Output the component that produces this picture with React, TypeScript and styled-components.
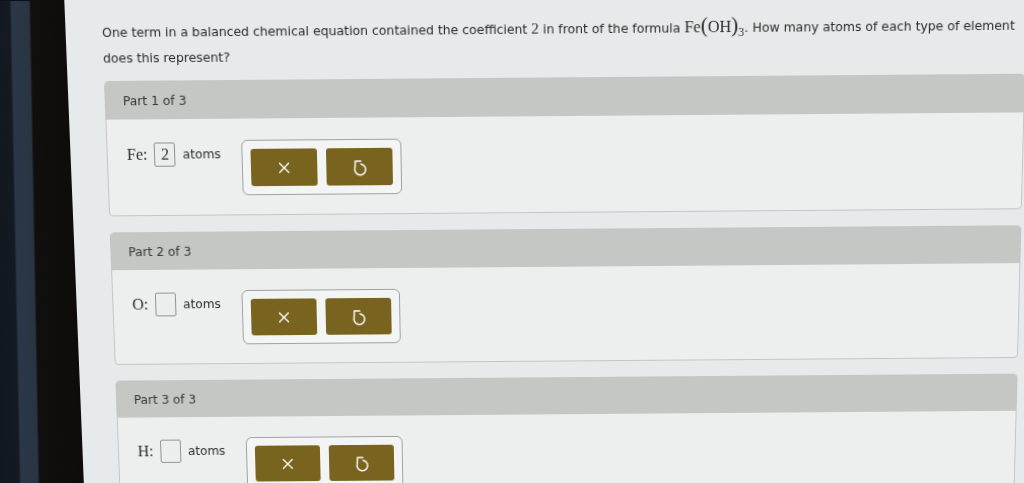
import React from "react";
import styled, { createGlobalStyle } from "styled-components";

const GlobalStyle = createGlobalStyle`
  html, body {
    margin: 0;
    padding: 0;
    background: #0e1014;
    overflow: hidden;
  }
  #root {
    width: 1024px;
    height: 483px;
    overflow: hidden;
  }
`;

const Viewport = styled.div`
  width: 1024px;
  height: 483px;
  overflow: hidden;
  background: #0e1014;
`;

// the photo is taken at a slight angle, so the whole screen is tilted back a little
const Scene = styled.div`
  width: 1140px;
  height: 540px;
  margin-left: -20px;
  display: flex;
  transform-origin: 560px 240px;
  transform: perspective(1000px) rotateX(-4deg) rotate(-0.45deg);
`;

const Bezel = styled.div`
  width: 94px;
  flex-shrink: 0;
  background: linear-gradient(
    91.4deg,
    #10151b 0,
    #141a22 40px,
    #2b3747 42px,
    #2a3543 59px,
    #110f0e 61px,
    #0e0c0b 100%
  );
`;

const Screen = styled.div`
  flex: 1;
  background: #e7eaea;
  padding: 18px 0 0 36px;
  font-family: "DejaVu Sans", Verdana, sans-serif;
  color: #2c2c2c;
`;

const Question = styled.p`
  margin: 0 0 9px;
  font-size: 12.3px;
  line-height: 25px;
  white-space: nowrap;
`;

const Serif = styled.span<{ $size?: number }>`
  font-family: "Liberation Serif", "Times New Roman", serif;
  font-size: ${(p) => p.$size ?? 16}px;
`;

const Paren = styled.span`
  font-family: "Liberation Serif", serif;
  font-size: 21px;
  line-height: 0;
`;

const Sub = styled.sub`
  font-family: "Liberation Serif", serif;
  font-size: 12px;
  line-height: 0;
  vertical-align: -4px;
`;

const Card = styled.section`
  width: 909px;
  margin-bottom: 16px;
  border: 1px solid #c2c6c6;
  border-radius: 4px;
  background: #edefef;
  overflow: hidden;
`;

const CardHeader = styled.div`
  height: 37px;
  display: flex;
  align-items: center;
  padding-left: 17px;
  background: #c4c7c3;
  font-size: 12.2px;
  color: #363636;
`;

const CardBody = styled.div`
  height: 95px;
  box-sizing: border-box;
  padding: 21px 0 0 19px;
  display: flex;
  align-items: flex-start;
`;

const Entry = styled.div`
  height: 24px;
  margin-top: 2px;
  display: flex;
  align-items: center;
  gap: 7px;
`;

const AnswerBox = styled.span`
  width: 21px;
  height: 24px;
  box-sizing: border-box;
  border: 1px solid #8f9393;
  border-radius: 2px;
  background: #eceeed;
  display: flex;
  align-items: center;
  justify-content: center;
  font-family: "Liberation Serif", serif;
  font-size: 16px;
  color: #333;
`;

const Unit = styled.span`
  font-size: 12.2px;
`;

const ActionGroup = styled.div`
  margin-left: 21px;
  display: flex;
  gap: 9px;
  padding: 8px;
  border: 1px solid #9ea2a2;
  border-radius: 6px;
  background: #f3f4f4;
`;

const ActionButton = styled.button`
  width: 66px;
  height: 37px;
  padding: 0;
  border: none;
  border-radius: 3px;
  background: #78641f;
  display: flex;
  align-items: center;
  justify-content: center;
  cursor: pointer;
`;

const ClearIcon = () => (
  <svg width="12" height="12" viewBox="0 0 12 12">
    <path d="M1.5 1.5 L10.5 10.5 M10.5 1.5 L1.5 10.5" stroke="#fff" strokeWidth="1.4" strokeLinecap="round" />
  </svg>
);

const UndoIcon = () => (
  <svg width="18" height="18" viewBox="0 0 16 16" fill="none">
    <path
      d="M9.3 5.27 A4.8 4.8 0 1 1 3.99 8.6 L4.3 2.6 H9.2"
      stroke="#fff"
      strokeWidth="1.3"
      strokeLinecap="round"
      strokeLinejoin="round"
    />
  </svg>
);

type Part = { label: string; value?: string };

const parts: Part[] = [
  { label: "Fe", value: "2" },
  { label: "O" },
  { label: "H" },
];

const App = () => {
  return (
    <Viewport>
      <GlobalStyle />
      <Scene>
        <Bezel />
        <Screen>
          <Question>
            One term in a balanced chemical equation contained the coefficient <Serif $size={15}>2</Serif> in front of the
            formula{" "}
            <Serif>
              Fe<Paren>(</Paren>OH<Paren>)</Paren>
              <Sub>3</Sub>
            </Serif>
            . How many atoms of each type of element
            <br />
            does this represent?
          </Question>
          {parts.map((part, i) => (
            <Card key={part.label}>
              <CardHeader>
                Part {i + 1} of {parts.length}
              </CardHeader>
              <CardBody>
                <Entry>
                  <Serif>{part.label}:</Serif>
                  <AnswerBox>{part.value}</AnswerBox>
                  <Unit>atoms</Unit>
                </Entry>
                <ActionGroup>
                  <ActionButton aria-label="clear">
                    <ClearIcon />
                  </ActionButton>
                  <ActionButton aria-label="undo">
                    <UndoIcon />
                  </ActionButton>
                </ActionGroup>
              </CardBody>
            </Card>
          ))}
        </Screen>
      </Scene>
    </Viewport>
  );
};

export default App;
